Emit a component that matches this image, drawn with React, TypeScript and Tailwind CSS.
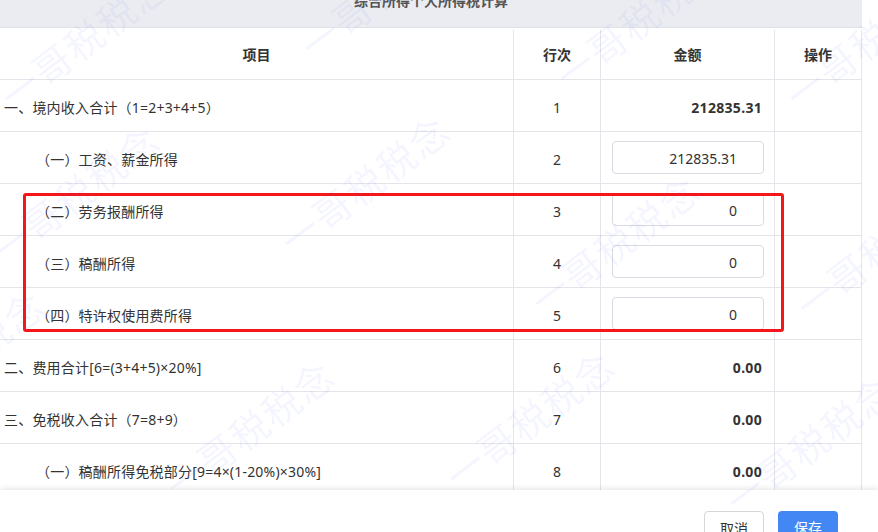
import React from 'react';

type Row = {
  label: string;
  no: number;
  indent?: boolean;
  value: string;
  input?: boolean;
};

const rows: Row[] = [
  { label: '一、境内收入合计（1=2+3+4+5）', no: 1, value: '212835.31' },
  { label: '（一）工资、薪金所得', no: 2, indent: true, value: '212835.31', input: true },
  { label: '（二）劳务报酬所得', no: 3, indent: true, value: '0', input: true },
  { label: '（三）稿酬所得', no: 4, indent: true, value: '0', input: true },
  { label: '（四）特许权使用费所得', no: 5, indent: true, value: '0', input: true },
  { label: '二、费用合计[6=(3+4+5)×20%]', no: 6, value: '0.00' },
  { label: '三、免税收入合计（7=8+9）', no: 7, value: '0.00' },
  { label: '（一）稿酬所得免税部分[9=4×(1-20%)×30%]', no: 8, indent: true, value: '0.00' },
];

// watermark centres, picked off the screenshot
const marks = [
  [85, 40], [385, -10], [640, 20], [870, 40],
  [75, 195], [365, 185], [615, 245], [880, 250],
  [-40, 360], [250, 430], [530, 420], [810, 445],
];

const cols = 'grid grid-cols-[514px_87px_174px_87px]';

export default function App() {
  return (
    <div
      className="relative w-[878px] h-[532px] overflow-hidden bg-white text-[#333] text-[14px]"
      style={{ fontFamily: '"Noto Sans", "Noto Sans CJK SC", sans-serif' }}
    >
      <div className="flex h-[490px]">
        <div className="w-[862px] flex flex-col">
          <div className="h-[28px] shrink-0 bg-[#ebecf1] border-b border-[#e0e1e7] flex justify-center">
            <span className="font-bold text-[14px] leading-[14px] mt-[-6px] text-[#555]">综合所得个人所得税计算</span>
          </div>

          <div className={`${cols} h-[52px] shrink-0 border-b border-[#e4e4ea] font-bold pt-[2px]`}>
            <div className="flex items-center justify-center border-r border-[#e4e4ea]">项目</div>
            <div className="flex items-center justify-center border-r border-[#e4e4ea]">行次</div>
            <div className="flex items-center justify-center border-r border-[#e4e4ea]">金额</div>
            <div className="flex items-center justify-center border-r border-[#e4e4ea]">操作</div>
          </div>

          <div className="flex-1 overflow-hidden">
            {rows.map((r) => (
              <div key={r.no} className={`${cols} h-[52px] border-b border-[#e4e4ea]`}>
                <div className={`flex items-center border-r border-[#e4e4ea] pt-[3px] tracking-[0.2px] ${r.indent ? 'pl-[36px]' : 'pl-[4px]'}`}>
                  {r.label}
                </div>
                <div className="flex items-center justify-center border-r border-[#e4e4ea] pt-[3px]">{r.no}</div>
                <div className="flex items-center justify-end border-r border-[#e4e4ea] pl-[11px] pr-[10px]">
                  {r.input ? (
                    <div className="w-full h-[33px] rounded-[4px] border border-[#d9dbe2] bg-white flex items-center justify-end pr-[26px] pt-[2px]">
                      {r.value}
                    </div>
                  ) : (
                    <span className="font-bold pr-[2px] pt-[3px] tracking-[0.3px]">{r.value}</span>
                  )}
                </div>
                <div className="border-r border-[#e4e4ea]" />
              </div>
            ))}
          </div>
        </div>
        <div className="flex-1" />
      </div>

      <div className="h-[42px] relative shadow-[0_-2px_5px_rgba(0,0,0,0.09)] flex justify-end items-start gap-[14px] pr-[40px] pt-[21px]">
        <button className="w-[60px] h-[32px] rounded-[4px] border border-[#d4d6dc] bg-white text-[#333] flex items-start justify-center pt-[6px]">
          取消
        </button>
        <button className="w-[60px] h-[32px] rounded-[4px] bg-[#4387f5] text-white flex items-start justify-center pt-[6px]">
          保存
        </button>
      </div>

      {/* highlight box */}
      <div className="absolute left-[23px] top-[193px] w-[761px] h-[139px] border-[3px] border-[#f4161a] rounded-[3px] pointer-events-none" />

      {/* watermark */}
      {marks.map(([x, y], i) => (
        <div
          key={i}
          className="absolute pointer-events-none whitespace-nowrap text-[38px] tracking-[2px] text-[rgba(90,110,240,0.07)]"
          style={{ left: x, top: y, transform: 'translate(-50%, -50%) rotate(-37deg)' }}
        >
          一哥税税念
        </div>
      ))}
    </div>
  );
}
